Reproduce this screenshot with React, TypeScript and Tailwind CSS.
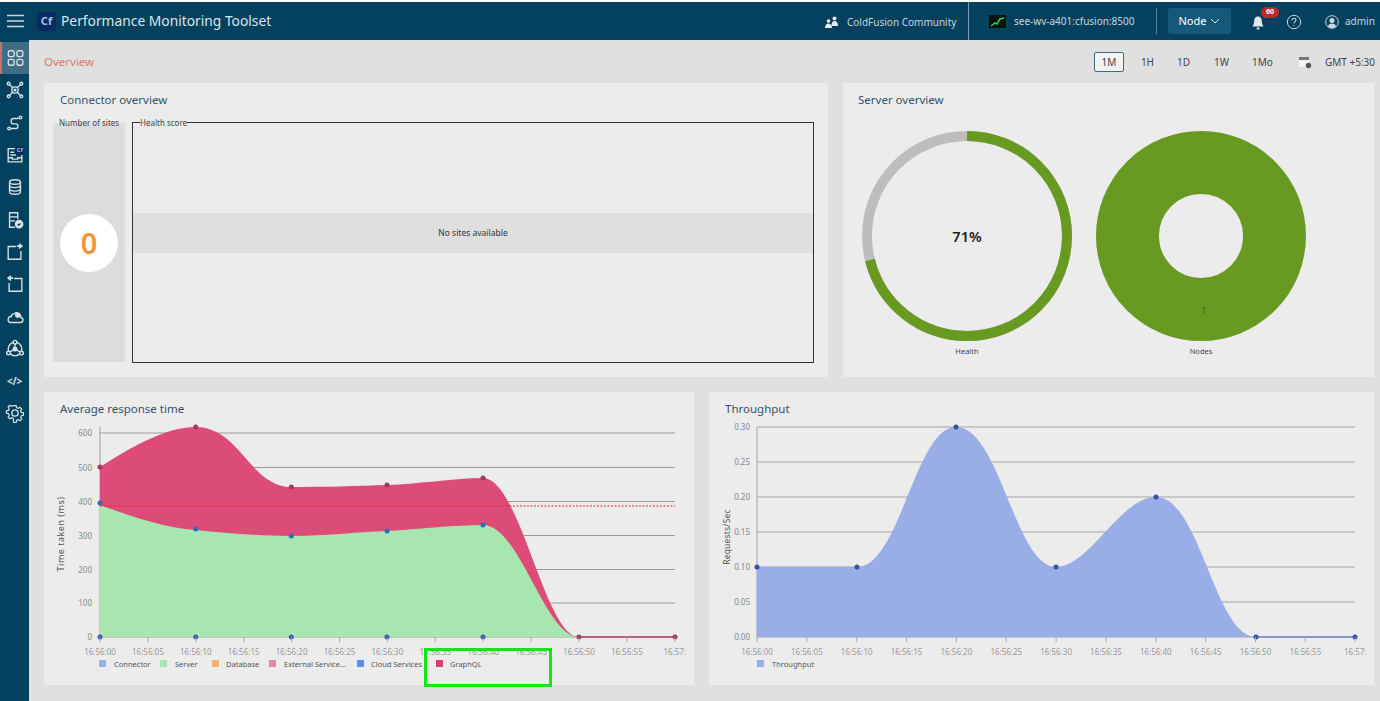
import React from "react";

const W = "stroke-[#d5e1e6]";

function Ic({ children, active }: { children: React.ReactNode; active?: boolean }) {
  return (
    <div className={`flex h-[32.3px] w-[29px] items-center justify-center ${active ? "border-l-2 border-[#c9735f] bg-[#3f6d84]" : ""}`}>
      <svg width="20" height="20" viewBox="0 0 22 22" fill="none" strokeWidth="1.5" className={W}>{children}</svg>
    </div>
  );
}

const times = ["16:56:00","16:56:05","16:56:10","16:56:15","16:56:20","16:56:25","16:56:30","16:56:35","16:56:40","16:56:45","16:56:50","16:56:55","16:57:"];

function Legend({ items }: { items: [number, number, string, string][] }) {
  return (
    <>
      {items.map(([sx, tx, c, t]) => (
        <g key={t}>
          <rect x={sx} y={660} width={7} height={7} fill={c} />
          <text x={tx} y={667} className="fill-[#555] font-['Open_Sans'] text-[7.5px]">{t}</text>
        </g>
      ))}
    </>
  );
}

function AvgChart() {
  const ys = [637, 603, 569.5, 535.5, 501.5, 467.5, 433];
  const px = [100, 195.7, 291.3, 387, 483, 579, 675];
  const redTop = "M100,467 C130,448 165,427 195.7,427 C240,427 250,487 291.3,487 C320,487 360,486 387,485 C420,484 455,478 483,478 C520,478 545,637 579,637 L675,637";
  const greenTop = "M100,505 C130,516 165,528 195.7,530 C225,533 260,536 291.3,536 C325,536 355,532 387,531 C420,529 455,525 483,525 C520,525 545,637 579,637";
  return (
    <svg viewBox="44 392 650 293" width="650" height="293" className="absolute left-0 top-0 overflow-visible">
      {ys.map((y, i) => (
        <g key={y}>
          <line x1={100} x2={675} y1={y} y2={y} stroke="#9a9a9a" strokeWidth="1" />
          <text x={92} y={y + 3} textAnchor="end" className="fill-[#888] font-['Liberation_Sans'] text-[8px]">{i * 100}</text>
        </g>
      ))}
      <line x1={100} x2={100} y1={427} y2={637} stroke="#9a9a9a" />
      <path d={`${redTop} L100,637 Z`} fill="#dd4b78" />
      <path d={`${greenTop} L100,637 Z`} fill="#a7e6ae" />
      <line x1={100} x2={675} y1={506} y2={506} stroke="#e8202e" strokeWidth="1.2" strokeDasharray="2 1.5" />
      <line x1={579} x2={675} y1={637} y2={637} stroke="#b2416f" strokeWidth="1.5" />
      {[[100,467],[195.7,427],[291.3,487],[387,485],[483,478],[579,637],[675,637]].map(([x,y]) => (
        <circle key={x} cx={x} cy={y} r={2.5} fill="#9c3a62" />
      ))}
      {[[100,503],[195.7,529],[291.3,536],[387,531],[483,525]].map(([x,y]) => (
        <circle key={x} cx={x} cy={y} r={2.5} fill="#2f6cb0" />
      ))}
      {px.slice(0,5).map((x) => <circle key={x} cx={x} cy={637} r={2.5} fill="#3b5bb0" />)}
      {times.map((t, i) => {
        const x = 100 + i * 47.9;
        return (
          <g key={t}>
            <line x1={x} x2={x} y1={637} y2={642} stroke="#aaa" />
            <text x={x} y={655} textAnchor="middle" className="fill-[#999] font-['Liberation_Sans'] text-[8px]">{t}</text>
          </g>
        );
      })}
      <text transform="translate(64,534) rotate(-90)" textAnchor="middle" className="fill-[#555] font-['Open_Sans'] text-[9px] tracking-[0.5px]">Time taken (ms)</text>
      <Legend items={[[99,114,"#9db0e6","Connector"],[160,175,"#a7e6ae","Server"],[212,226,"#f3b26e","Database"],[269,284,"#de8aa8","External Service..."],[357,371,"#5b8fe8","Cloud Services"],[436,450,"#dd3f6e","GraphQL"]]} />
      <rect x={425.5} y={649.5} width={125} height={36} fill="none" stroke="#10e810" strokeWidth="3" />
    </svg>
  );
}

function ThroughputChart() {
  const ys = [637, 602, 567, 532, 497, 462, 427];
  const labels = ["0.00","0.05","0.10","0.15","0.20","0.25","0.30"];
  const area = "M757,567 L857,567 C900,567 915,427 956,427 C1000,427 1015,567 1056,567 C1090,567 1120,497 1156,497 C1200,497 1215,637 1256,637 L1355,637";
  return (
    <svg viewBox="709 392 665 293" width="665" height="293" className="absolute left-0 top-0 overflow-visible">
      {ys.map((y, i) => (
        <g key={y}>
          <line x1={757} x2={1355} y1={y} y2={y} stroke="#a3a3a3" />
          <text x={750} y={y + 3} textAnchor="end" className="fill-[#888] font-['Liberation_Sans'] text-[8px]">{labels[i]}</text>
        </g>
      ))}
      <line x1={757} x2={757} y1={427} y2={637} stroke="#a3a3a3" />
      <path d={`${area} L757,637 Z`} fill="#99aee6" />
      <line x1={1256} x2={1355} y1={637} y2={637} stroke="#6f86c8" strokeWidth="1.5" />
      {[[757,567],[857,567],[956,427],[1056,567],[1156,497],[1256,637],[1355,637]].map(([x,y]) => (
        <circle key={x} cx={x} cy={y} r={2.5} fill="#2f55a8" />
      ))}
      {times.map((t, i) => {
        const x = 757 + i * 49.85;
        return (
          <g key={t}>
            <line x1={x} x2={x} y1={637} y2={642} stroke="#aaa" />
            <text x={x} y={655} textAnchor="middle" className="fill-[#999] font-['Liberation_Sans'] text-[8px]">{t}</text>
          </g>
        );
      })}
      <text transform="translate(730,537) rotate(-90)" textAnchor="middle" className="fill-[#555] font-['Open_Sans'] text-[8.5px] tracking-[0.2px]">Requests/Sec</text>
      <Legend items={[[757,772,"#99aee6","Throughput"]]} />
    </svg>
  );
}

function Donuts() {
  const r = 100;
  const c = 2 * Math.PI * r;
  return (
    <svg viewBox="843 83 531 294" width="531" height="294" className="absolute left-0 top-0">
      <circle cx={967} cy={236} r={r} fill="none" stroke="#bdbdbd" strokeWidth="10" />
      <circle cx={967} cy={236} r={r} fill="none" stroke="#689a22" strokeWidth="10" strokeDasharray={`${c * 0.71} ${c}`} transform="rotate(-90 967 236)" />
      <text x={967} y={242} textAnchor="middle" className="fill-[#222] font-['Open_Sans'] text-[14.5px] font-semibold">71%</text>
      <text x={967} y={354} textAnchor="middle" className="fill-[#444] font-['Open_Sans'] text-[7.5px]">Health</text>
      <circle cx={1201} cy={236} r={73.5} fill="none" stroke="#689a22" strokeWidth="63" />
      <text x={1204} y={314} textAnchor="middle" className="fill-[#3f5f14] font-['Open_Sans'] text-[9px]">1</text>
      <text x={1201} y={354} textAnchor="middle" className="fill-[#444] font-['Open_Sans'] text-[7.5px]">Nodes</text>
    </svg>
  );
}

export default function App() {
  return (
    <div className="relative flex h-[701px] w-[1380px] flex-col overflow-hidden bg-[#e0e0e0] font-['Open_Sans',sans-serif]">
      <div className="h-[2px] bg-white" />
      <header className="flex h-[38px] items-center bg-[#04415f] text-[#dce6ea]">
        <svg width="18" height="14" viewBox="0 0 18 14" className="ml-[7px] stroke-[#c9d6dc]" strokeWidth="1.4">
          <path d="M0 1.5H17M0 7H17M0 12.5H17" />
        </svg>
        <div className="ml-[12px] flex h-[19px] w-[19px] items-center justify-center rounded-[3px] bg-[#0c2a62] text-[11px] font-bold text-[#9fc6ee]">Cf</div>
        <div className="ml-[5px] text-[13.8px] text-[#d6e6ee]">Performance Monitoring Toolset</div>
        <div className="ml-auto mr-[6px] flex h-full items-center">
          <svg width="14" height="12" viewBox="0 0 14 12" className="mt-[2px] fill-[#e4ecef]">
            <circle cx="3.5" cy="5" r="1.8" /><path d="M0 12c0-3 1.5-4.5 3.5-4.5S7 9 7 12Z" />
            <circle cx="9.5" cy="2.5" r="2" /><path d="M6.5 10c0-3.5 1-5 3-5s3.500 1.500 3.500 5Z" />
          </svg>
          <div className="ml-[8px] mt-[2px] w-[110px] whitespace-nowrap text-[10px] text-[#c7d6dd]">ColdFusion Community</div>
          <div className="ml-[11px] h-full w-px bg-[#7d9aa8]" />
          <svg width="17" height="13" viewBox="0 0 17 13" className="ml-[20px]">
            <rect width="17" height="13" fill="#05140f" />
            <path d="M2 11 L6 8 L8 9 L11 4 L15 3" fill="none" stroke="#2fd04a" strokeWidth="1.5" />
          </svg>
          <div className="ml-[8px] w-[142px] whitespace-nowrap text-[10px] text-[#c7d6dd]">see-wv-a401:cfusion:8500</div>
          <div className="h-[26px] w-px bg-[#5d8296]" />
          <div className="ml-[11px] flex h-[26px] w-[63px] items-center justify-center gap-1 rounded-[3px] bg-[#15587a] text-[11px] text-white">
            Node
            <svg width="10" height="6" viewBox="0 0 10 6" fill="none" stroke="#dce6ea" strokeWidth="1"><path d="M1 1l4 4 4-4" /></svg>
          </div>
          <div className="relative ml-[21px] mt-[3px] flex h-[14px] w-[12px]">
            <svg width="12" height="14" viewBox="0 0 12 14" className="fill-[#dfe8ec]">
              <path d="M6 0.500c-2.500 0-3.800 2-3.800 4.500 0 3-1.200 4.500-1.800 5.500h11.200c-.6-1-1.800-2.500-1.800-5.500 0-2.500-1.300-4.500-3.800-4.500Z" /><rect x="4.500" y="11.500" width="3" height="2" rx="1" />
            </svg>
            <div className="absolute left-[9px] top-[-9px] flex h-[11px] w-[18px] items-center justify-center rounded-full bg-[#c0272d] text-[7px] font-bold text-white">60</div>
          </div>
          <svg width="16" height="16" viewBox="0 0 16 16" fill="none" className="ml-[22px] mt-[2px] stroke-[#c9d6dc]">
            <circle cx="8" cy="8" r="6.700" strokeWidth="1" />
            <path d="M6 6.300c0-1.200.9-2 2-2s2 .8 2 1.800c0 1.500-2 1.500-2 3.200M8 11v1" strokeWidth="1.100" fill="none" />
          </svg>
          <svg width="14" height="14" viewBox="0 0 14 14" className="ml-[23px] mt-[2px]">
            <circle cx="7" cy="7" r="6.300" fill="none" stroke="#c9d6dc" strokeWidth="1" />
            <circle cx="7" cy="5.500" r="2.500" fill="#c9d6dc" />
            <path d="M2.800 11.500c.6-2 2.200-3 4.200-3s3.600 1 4.200 3a6 6 0 0 1-8.400 0Z" fill="#c9d6dc" />
          </svg>
          <div className="ml-[6px] w-[29px] text-[10px] text-[#c7d6dd]">admin</div>
        </div>
      </header>
      <div className="flex flex-1">
        <aside className="flex w-[29px] flex-col bg-[#04415f] pt-[2px]">
          <Ic active>
            <rect x="2.500" y="3" width="6.500" height="6.500" rx="2" /><rect x="12" y="3" width="6.500" height="6.500" rx="2" />
            <rect x="2.500" y="12.500" width="6.500" height="6.500" rx="2" /><rect x="12" y="12.500" width="6.500" height="6.500" rx="2" />
          </Ic>
          <Ic>
            <circle cx="11" cy="11" r="3.500" /><circle cx="11" cy="11" r="1" fill="#dfe8ec" />
            <circle cx="4" cy="4" r="1.500" /><circle cx="18" cy="4" r="1.500" /><circle cx="4" cy="18" r="1.500" /><circle cx="18" cy="18" r="1.500" />
            <path d="M5 5l3.500 3.500M17 5l-3.500 3.500M5 17l3.500-3.500M17 17l-3.500-3.500" />
          </Ic>
          <Ic>
            <circle cx="4.500" cy="17" r="1.500" /><circle cx="17" cy="5" r="1.500" />
            <path d="M6 17h6c3 0 3-5 0-5h-3c-3 0-3-6 0-6h6" />
          </Ic>
          <Ic>
            <path d="M11 4H3.500v14.500h15V11" /><path d="M3.500 14h4.500v1.500h6V14h4.500" /><path d="M6 8h4M6 11h6" />
            <rect x="12" y="1.500" width="8" height="8" fill="#0c2a62" stroke="none" />
            <text x="13" y="8" className="fill-[#9fc6ee] stroke-0 font-['Open_Sans'] text-[6.500px] font-bold">Cf</text>
          </Ic>
          <Ic>
            <ellipse cx="11" cy="5.500" rx="6" ry="2.500" /><path d="M5 5.500v11c0 1.400 2.700 2.500 6 2.500s6-1.100 6-2.500v-11" /><path d="M5 9.200c0 1.400 2.700 2.500 6 2.500s6-1.100 6-2.500M5 13c0 1.400 2.700 2.500 6 2.500s6-1.100 6-2.500" />
          </Ic>
          <Ic>
            <path d="M11 19H5V3h9v7" /><path d="M5 7.500h9M5 12h6" /><circle cx="15.500" cy="15.500" r="4" fill="#dfe8ec" />
            <path d="M14 15.500l1.200 1.200 2-2" stroke="#04415f" />
          </Ic>
          <Ic>
            <path d="M12 5H3.500v14h14V10" /><path d="M13 4.500h5M15.500 2l3 2.500-3 2.500" strokeWidth="1.800" />
          </Ic>
          <Ic>
            <path d="M10 5h8.500v14h-14V10" /><path d="M9 4.500H4M6.500 2l-3 2.500 3 2.500" strokeWidth="1.800" />
          </Ic>
          <Ic>
            <path d="M6 17h11c3.500 0 3.500-5 .5-5.500C17.500 7 13 5 10 7.500 8 7.500 7 9 7 10.500c-4-.5-5 6.500-1 6.500Z" /><circle cx="14" cy="9" r="2.200" fill="#dfe8ec" />
          </Ic>
          <Ic>
            <circle cx="11" cy="11" r="7.500" /><circle cx="11" cy="11" r="2" fill="#dfe8ec" />
            <path d="M11 9V4M9.300 12l-5 3M12.700 12l5 3" />
            <circle cx="11" cy="3.500" r="2" fill="#04415f" /><circle cx="3.800" cy="15.500" r="2" fill="#04415f" /><circle cx="18.200" cy="15.500" r="2" fill="#04415f" />
          </Ic>
          <div className="flex h-[32.300px] w-[29px] items-center justify-center text-[10px] font-bold tracking-tight text-[#dfe8ec]">&lt;/&gt;</div>
          <Ic>
            <circle cx="11" cy="11" r="3.500" />
            <path d="M9.500 2h3l.5 2.500 2 .9 2.200-1.300 2.100 2.100-1.300 2.200.9 2 2.500.5v3l-2.500.5-.9 2 1.300 2.200-2.100 2.100-2.200-1.300-2 .9-.5 2.500h-3L9 17.800l-2-.9-2.200 1.300-2.100-2.100L4 13.900l-.9-2L.6 11.400v-3l2.500-.5.900-2-1.300-2.200 2.100-2.100L7 2.900l2-.9Z" transform="translate(1 1) scale(.9)" />
          </Ic>
        </aside>
        <main className="flex-1 pl-[15px] pr-[5px]">
          <div className="flex h-[43px] items-center pt-[1px]">
            <div className="text-[11.500px] text-[#d97a6b]">Overview</div>
            <div className="ml-auto flex items-center text-[10px] text-[#444]">
              <div className="flex h-[20px] w-[30px] items-center justify-center rounded-[2px] border border-[#3f6b80] bg-[#f2f2f2]">1M</div>
              <div className="ml-[17px]">1H</div>
              <div className="ml-[23px]">1D</div>
              <div className="ml-[24px]">1W</div>
              <div className="ml-[23px]">1Mo</div>
              <svg width="14" height="14" viewBox="0 0 14 14" className="ml-[25px]">
                <rect x="1" y="2" width="10" height="10" fill="#f4f4f4" /><rect x="1" y="2" width="10" height="3" fill="#777" /><circle cx="10.500" cy="10.500" r="2.700" fill="#555" />
              </svg>
              <div className="ml-[13px] text-[10px]">GMT +5:30</div>
            </div>
          </div>
          <div className="flex gap-[15px]">
            <section className="relative h-[294px] w-[784px] bg-[#ececec]">
              <h2 className="absolute left-[16px] top-[8px] text-[11.500px] text-[#33536b]">Connector overview</h2>
              <div className="absolute left-[9px] top-[40px] flex h-[239px] w-[72px] items-center justify-center bg-[#dcdcdc]">
                <div className="flex h-[58px] w-[58px] items-center justify-center rounded-full bg-white text-[29px] font-semibold leading-none text-[#f5923b]">0</div>
              </div>
              <div className="absolute left-[15px] top-[34px] text-[8px] text-[#444]">Number of sites</div>
              <div className="absolute left-[88px] top-[39px] h-[241px] w-[682px] border border-[#333] pt-[90px]">
                <div className="flex h-[40px] w-full items-center justify-center bg-[#dfdfdf] text-[8.500px] text-[#333]">No sites available</div>
              </div>
              <div className="absolute left-[96px] top-[34px] bg-[#ececec] text-[8px] text-[#444]">Health score</div>
            </section>
            <section className="relative h-[294px] w-[531px] bg-[#ececec]">
              <h2 className="absolute left-[15px] top-[8px] text-[11.500px] text-[#33536b]">Server overview</h2>
              <Donuts />
            </section>
          </div>
          <div className="mt-[15px] flex gap-[15px]">
            <section className="relative h-[293px] w-[650px] bg-[#ececec]">
              <h2 className="absolute left-[16px] top-[8px] text-[11.500px] text-[#33536b]">Average response time</h2>
              <AvgChart />
            </section>
            <section className="relative h-[293px] w-[665px] bg-[#ececec]">
              <h2 className="absolute left-[16px] top-[8px] text-[11.500px] text-[#33536b]">Throughput</h2>
              <ThroughputChart />
            </section>
          </div>
        </main>
      </div>
    </div>
  );
}
